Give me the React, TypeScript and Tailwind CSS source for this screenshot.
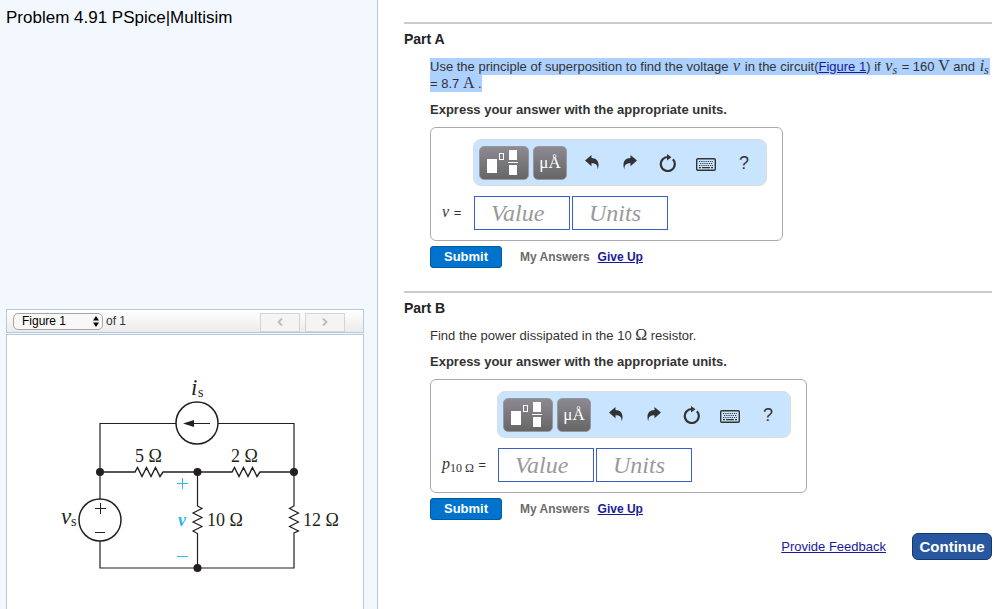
import { useState, type ReactNode } from 'react';

interface PartProps {
  id: string;
  title: string;
  question: ReactNode;
  label: ReactNode;
  wideLabel?: boolean;
}

const SERIF = "font-['Liberation_Serif',serif]";

const ICONS = {
  undo: (
    <svg width="14" height="15" viewBox="0 0 14 15" fill="#333">
      <path d="M0 5.5 6.5 0v3.1c5.6.2 8.7 4.4 6.1 11.4.3-4.300-1.7-6.3-6.1-6.3v3.1z" />
    </svg>
  ),
  redo: (
    <svg width="14" height="15" viewBox="0 0 14 15" fill="#333">
      <path d="M14 5.5 7.5 0v3.1C1.900 3.300-1.200 7.5 1.4 14.5 1.100 10.200 3.100 8.200 7.500 8.200v3.1z" />
    </svg>
  ),
  reset: (
    <svg width="18" height="18" viewBox="0 0 18 18">
      <path d="M13.9 5.2A7 7 0 1 1 9.2 3" fill="none" stroke="#333" strokeWidth="2.2" />
      <path d="M8 0v6.5L12.5 3.2z" fill="#333" />
    </svg>
  ),
  keyboard: (
    <svg width="20" height="13" viewBox="0 0 20 13" fill="none" stroke="#333">
      <rect x="0.7" y="0.7" width="18.6" height="11.6" rx="1.2" strokeWidth="1.4" />
      <path d="M3 3.5h14M4 5.5h13M3 7.5h14" strokeWidth="1.2" strokeDasharray="1.2 1" />
      <path d="M3 9.7h2M6 9.7h8M15 9.7h2" strokeWidth="1.3" />
    </svg>
  ),
  template: (
    <svg width="34" height="28" viewBox="0 0 34 28">
      <rect x="0" y="12" width="10" height="14" fill="#fff" />
      <rect x="12.5" y="6.5" width="4" height="6" fill="none" stroke="#fff" />
      <rect x="22" y="3" width="8" height="10" fill="#fff" />
      <rect x="21" y="15" width="10" height="1" fill="#fff" />
      <rect x="22" y="18" width="8" height="10" fill="#fff" />
    </svg>
  ),
};

function Circuit() {
  return (
    <svg width="320" height="210" viewBox="0 0 320 210" role="img" aria-label="Circuit diagram" className={`mx-auto mt-[35px] ${SERIF}`}>
      <g fill="none" stroke="#231f20" strokeWidth="1.2">
        <path d="M151 53.5H75V129M75 171v27h194V163l4.500-2-9-4.500 9-4.500-9-4.500 9-4.500-9-4.500 4.500-2.500V53.5h-76" />
        <path d="M75 102h35l2.500-4.500 4.500 9 4.500-9 4.500 9 4.500-9 4.500 9L138 102h69l2.500-4.500 4.500 9 4.500-9 4.500 9 4.500-9 4.500 9L235 102h34" strokeWidth="1.4" />
        <path d="M172.5 102v34l4.500 2.500-9 4.500 9 4.500-9 4.500 9 4.500-9 4.500 4.500 2.500v35" />
        <circle cx="172" cy="53" r="21" strokeWidth="1.5" />
        <circle cx="75" cy="150" r="21" strokeWidth="1.5" />
        <path d="M185 53.5h-20M70 138.5h11M75.5 133v11M70 162.5h10" strokeWidth="1" />
      </g>
      <g fill="#231f20">
        <path d="M158 53.5l11-3.5v7z" />
        <circle cx="75" cy="102" r="4" />
        <circle cx="172.5" cy="102" r="4" />
        <circle cx="269" cy="102" r="4" />
        <circle cx="172.5" cy="198" r="4" />
        <text x="110" y="92" fontSize="18">5 Ω</text>
        <text x="206" y="92" fontSize="18">2 Ω</text>
        <text x="182" y="156" fontSize="18">10 Ω</text>
        <text x="278" y="156" fontSize="18">12 Ω</text>
        <text x="166" y="25" fontSize="23" fontStyle="italic">i</text>
        <text x="173" y="27" fontSize="14">s</text>
        <text x="36" y="154" fontSize="23" fontStyle="italic">v</text>
        <text x="46" y="156" fontSize="14">s</text>
      </g>
      <path d="M152 113.5h11M157.5 108v11M152 186.5h11" stroke="#27bdea" fill="none" />
      <text x="153" y="156" fontSize="18" fontStyle="italic" fontWeight="bold" fill="#27b4e6">v</text>
    </svg>
  );
}

function IconButton({ label, children }: { label: string; children: ReactNode }) {
  return (
    <button type="button" aria-label={label} className="flex h-8 w-[38px] items-center justify-center text-[#333]">
      {children}
    </button>
  );
}

function Toolbar() {
  const dark = 'flex h-[34px] items-center justify-center rounded-[5px] border border-[#99979c] bg-linear-to-b from-[#8d8992] to-[#666] text-white';
  return (
    <div className="flex h-[47px] w-[294px] items-center rounded-lg border border-[#dcdcdc] bg-[#c9e4ff] pl-[5px]">
      <button type="button" aria-label="Templates" className={`${dark} w-[50px] pb-1`}>
        {ICONS.template}
      </button>
      <button type="button" aria-label="Symbols" className={`${dark} ml-1 w-[34px] text-[17px] ${SERIF}`}>
        μÅ
      </button>
      <div className="ml-1.5 flex">
        <IconButton label="Undo">{ICONS.undo}</IconButton>
        <IconButton label="Redo">{ICONS.redo}</IconButton>
        <IconButton label="Reset">{ICONS.reset}</IconButton>
        <IconButton label="Keyboard shortcuts"><span className="pt-1">{ICONS.keyboard}</span></IconButton>
        <IconButton label="Help"><span className="text-lg">?</span></IconButton>
      </div>
    </div>
  );
}

function Part({ id, title, question, label, wideLabel }: PartProps) {
  const [value, setValue] = useState('');
  const [units, setUnits] = useState('');
  const field = `h-[34px] w-24 border border-[#3a5fcd] bg-white px-4 text-2xl italic text-[#333] outline-none placeholder:text-[#999] ${SERIF}`;

  return (
    <section className="mb-[23px] border-t-2 border-[#ccc] pt-[5px]">
      <h2 className="text-sm leading-5 font-bold text-[#222]">{title}</h2>
      <div className="pl-[26px]">
        <p className="mt-[9px] text-[13px] leading-[17px]">{question}</p>
        <p className="mt-2.5 text-[13px] leading-4 font-bold">Express your answer with the appropriate units.</p>
        <div className="mt-[9px] w-fit rounded-md border border-[#aaa] pt-[11px] pr-[15px] pb-2.5">
          <div className={wideLabel ? 'pl-[66px]' : 'pl-[42px]'}>
            <Toolbar />
          </div>
          <div className="mt-2.5 flex items-center">
            <label htmlFor={`${id}-value`} className={`pl-2.5 text-[13px] whitespace-nowrap ${wideLabel ? 'w-[67px]' : 'w-[43px]'}`}>
              {label}
            </label>
            <div className="flex gap-0.5">
              <input id={`${id}-value`} value={value} onChange={(e) => setValue(e.target.value)} placeholder="Value" className={field} />
              <input aria-label="Units" value={units} onChange={(e) => setUnits(e.target.value)} placeholder="Units" className={field} />
            </div>
          </div>
        </div>
        <div className="mt-[5px] flex items-center text-xs font-bold">
          <button type="button" className="h-[22px] w-[72px] rounded-[3px] border border-[#005a9c] bg-[#0073cf] text-[13px] leading-4 text-white">
            Submit
          </button>
          <span className="ml-[18px] text-[#6b6b6b]">My Answers</span>
          <a href="#give-up" className="ml-2 text-[#1a1a99] underline">Give Up</a>
        </div>
      </div>
    </section>
  );
}

function FigurePane() {
  const nav = 'flex h-[19px] w-10 items-center justify-center border border-[#d5d5d5] bg-[#f4f4f4] text-[#bbb]';
  return (
    <div className="mr-[13px] ml-1.5 flex flex-1 flex-col">
      <div className="flex h-6 items-center border border-[#b5c9db] bg-linear-to-b from-white to-[#ebebeb] pr-[18px] pl-1.5 text-xs text-[#333]">
        <div className="relative">
          <select aria-label="Figure" className="block h-[17px] w-[90px] appearance-none rounded-[5px] border border-[#a5a5a5] bg-[#f8f8f8] pl-2 leading-[15px] text-black">
            <option>Figure 1</option>
          </select>
          <svg width="6" height="11" viewBox="0 0 6 11" className="pointer-events-none absolute top-[3px] right-1">
            <path d="M3 0l3 4.5H0zM3 11l3-4.500H0z" />
          </svg>
        </div>
        <span className="ml-[3px]">of 1</span>
        <div className="ml-auto flex gap-[5px] pt-0.5">
          <button type="button" aria-label="Previous figure" disabled className={nav}>
            <svg width="6" height="8" viewBox="0 0 6 8" fill="none" stroke="currentColor" strokeWidth="1.8"><path d="M5 .5 1.5 4 5 7.5" /></svg>
          </button>
          <button type="button" aria-label="Next figure" disabled className={nav}>
            <svg width="6" height="8" viewBox="0 0 6 8" fill="none" stroke="currentColor" strokeWidth="1.8"><path d="M1 .5 4.5 4 1 7.5" /></svg>
          </button>
        </div>
      </div>
      <div className="mt-px flex-1 border border-b-0 border-[#b5c9db] bg-white">
        <Circuit />
      </div>
    </div>
  );
}

function Var({ name, sub }: { name: string; sub?: ReactNode }) {
  return (
    <span className={`px-px text-base leading-none ${SERIF}`}>
      <i>{name}</i>
      {sub && <span className="relative top-[3px] text-xs leading-none">{sub}</span>}
    </span>
  );
}

function Unit({ children }: { children: ReactNode }) {
  return <span className={`text-base leading-none ${SERIF}`}>{children}</span>;
}

export default function App() {
  return (
    <div className="flex min-h-screen bg-white font-['Liberation_Sans',Arial,sans-serif] text-[#333]">
      <aside className="flex w-3/8 flex-col border-r border-[#b5c9db] bg-[#f3f8ff]">
        <h1 className="h-[309px] pt-1.5 pl-1.5 text-[17px] leading-6 text-black">Problem 4.91 PSpice|Multisim</h1>
        <FigurePane />
      </aside>
      <main className="flex-1 pt-[22px] pr-4 pl-[26px]">
        <Part
          id="part-a"
          title="Part A"
          question={
            <span className="bg-[#acd0ff] box-decoration-clone py-px">
              Use the principle of superposition to find the voltage <Var name="v" /> in the circuit(
              <a href="#figure-1" className="text-[#1a1a99] underline">Figure 1</a>) if <Var name="v" sub={<i>s</i>} /> = 160 <Unit>V</Unit> and <Var name="i" sub={<i>s</i>} /> = 8.7 <Unit>A</Unit> .
            </span>
          }
          label={<><Var name="v" /> =</>}
        />
        <Part
          id="part-b"
          title="Part B"
          question={<>Find the power dissipated in the 10 <Unit>Ω</Unit> resistor.</>}
          label={<><Var name="p" sub="10 Ω" /> =</>}
          wideLabel
        />
        <div className="-mt-2.5 flex items-center justify-end gap-[26px]">
          <a href="#feedback" className="text-[13px] text-[#1a1a99] underline">Provide Feedback</a>
          <button type="button" className="h-[27px] w-20 rounded-md border border-[#0f3a70] bg-[#2857a0] text-[15px] leading-none font-bold text-white">
            Continue
          </button>
        </div>
      </main>
    </div>
  );
}
